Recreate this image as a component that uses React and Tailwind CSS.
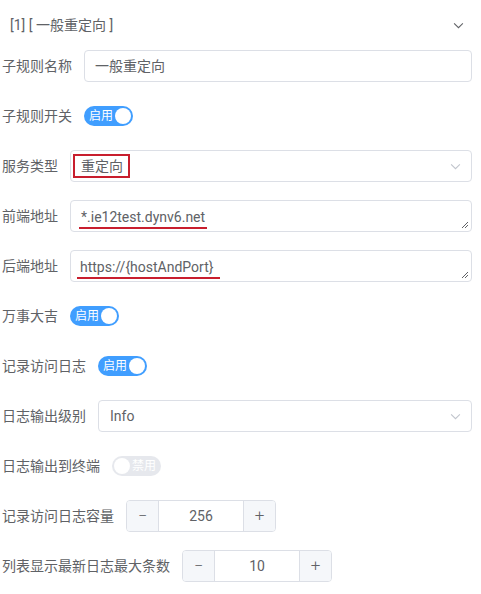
import React from 'react';

const font = { fontFamily: 'Roboto, "Noto Sans CJK SC", sans-serif' };

const Chevron = ({ className }) => (
  <svg viewBox="0 0 12 8" className={className} fill="none" stroke="currentColor" strokeWidth="1.2">
    <path d="M1 1.5 L6 6.5 L11 1.5" />
  </svg>
);

const Label = ({ children }) => (
  <div className="shrink-0 pr-[12px] text-[14px] text-[#606266] leading-[32px] whitespace-nowrap">{children}</div>
);

const Row = ({ label, children }) => (
  <div className="flex items-center h-[32px] mb-[18px]">
    <Label>{label}</Label>
    {children}
  </div>
);

const Switch = ({ on }) =>
  on ? (
    <div className="flex items-center w-[49px] h-[20px] rounded-full bg-[#409eff] pl-[5px] pr-[2px]">
      <span className="text-[12px] text-white leading-none">启用</span>
      <span className="ml-auto w-[16px] h-[16px] rounded-full bg-white" />
    </div>
  ) : (
    <div className="flex items-center w-[49px] h-[20px] rounded-full bg-[#dcdfe6] opacity-70 pl-[2px] pr-[5px]">
      <span className="w-[16px] h-[16px] rounded-full bg-white" />
      <span className="ml-auto text-[12px] text-white leading-none">禁用</span>
    </div>
  );

const Resize = () => (
  <svg viewBox="0 0 8 8" className="absolute right-[2px] bottom-[2px] w-[8px] h-[8px] text-[#606266]" stroke="currentColor" strokeWidth="1">
    <path d="M1 7 L7 1 M4 7 L7 4" />
  </svg>
);

const NumberBox = ({ value }) => (
  <div className="flex w-[150px] h-[32px] border border-[#dcdfe6] rounded-[4px] overflow-hidden text-[#606266]">
    <div className="w-[32px] flex items-center justify-center bg-[#f5f7fa] border-r border-[#dcdfe6] text-[16px] font-light">−</div>
    <div className="flex-1 flex items-center justify-center text-[14px]">{value}</div>
    <div className="w-[32px] flex items-center justify-center bg-[#f5f7fa] border-l border-[#dcdfe6] text-[17px] font-light">+</div>
  </div>
);

export default function App() {
  return (
    <div className="w-[481px] h-[594px] bg-white pl-[2px] pr-[9px]" style={font}>
      <div className="flex items-center h-[50px] pl-[8px] pr-[8px] text-[14px] text-[#606266]">
        <span>[1] [ 一般重定向 ]</span>
        <Chevron className="ml-auto w-[11px] h-[7px] text-[#606266]" />
      </div>

      <Row label="子规则名称">
        <div className="flex-1 h-[32px] border border-[#dcdfe6] rounded-[4px] px-[10px] flex items-center text-[14px] text-[#606266]">一般重定向</div>
      </Row>

      <Row label="子规则开关">
        <Switch on />
      </Row>

      <Row label="服务类型">
        <div className="flex-1 h-[32px] border border-[#dcdfe6] rounded-[4px] pl-[2px] pr-[10px] flex items-center text-[14px] text-[#606266]">
          <span className="border-2 border-[#c81e2e] h-[24px] pl-[6px] pr-[5px] flex items-center">重定向</span>
          <Chevron className="ml-auto w-[11px] h-[7px] text-[#c0c4cc]" />
        </div>
      </Row>

      <Row label="前端地址">
        <div className="relative flex-1 h-[32px] border border-[#dcdfe6] rounded-[4px] pl-[8px] flex items-center text-[14px] text-[#606266]">
          <span className="border-b-2 border-[#c81e2e] px-[2px] leading-[20px] pt-[4px]">*.ie12test.dynv6.net</span>
          <Resize />
        </div>
      </Row>

      <Row label="后端地址">
        <div className="relative flex-1 h-[32px] border border-[#dcdfe6] rounded-[4px] pl-[6px] flex items-center text-[14px] text-[#606266]">
          <span className="border-b-2 border-[#c81e2e] pl-[3px] pr-[6px] leading-[20px] pt-[4px]">https://{'{hostAndPort}'}</span>
          <Resize />
        </div>
      </Row>

      <Row label="万事大吉">
        <Switch on />
      </Row>

      <Row label="记录访问日志">
        <Switch on />
      </Row>

      <Row label="日志输出级别">
        <div className="flex-1 h-[32px] border border-[#dcdfe6] rounded-[4px] pl-[11px] pr-[10px] flex items-center text-[14px] text-[#606266]">
          <span>Info</span>
          <Chevron className="ml-auto w-[11px] h-[7px] text-[#c0c4cc]" />
        </div>
      </Row>

      <Row label="日志输出到终端">
        <Switch on={false} />
      </Row>

      <Row label="记录访问日志容量">
        <NumberBox value="256" />
      </Row>

      <Row label="列表显示最新日志最大条数">
        <NumberBox value="10" />
      </Row>
    </div>
  );
}
